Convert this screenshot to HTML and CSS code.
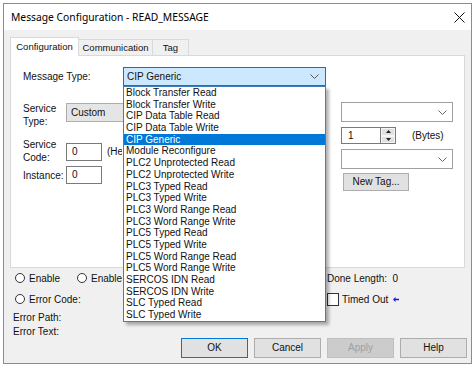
FILE: index.html
```html
<!DOCTYPE html>
<html lang="en">
<head>
  <meta charset="UTF-8">
  <title>Message Configuration - READ_MESSAGE</title>
  <link rel="stylesheet" href="styles.css">
</head>
<body>

<!-- Dialog window -->
<div class="window">
  <div class="titlebar">
    <span class="title">Message Configuration - READ_MESSAGE</span>
    <svg class="close" width="11" height="11" viewBox="0 0 11 11">
      <path d="M0.5 0.5L10.5 10.5M10.5 0.5L0.5 10.5" stroke="#111" stroke-width="1"/>
    </svg>
  </div>

  <div class="tabs">
    <div class="tab active">Configuration</div>
    <div class="tab comm">Communication</div>
    <div class="tab tag">Tag</div>
  </div>

  <div class="panel">
    <div class="msg-row">
      <span class="msg-label">Message Type:</span>
      <div class="combo selected">
        <span>CIP Generic</span>
        <svg class="chev" width="9" height="5" viewBox="0 0 9 5"><path d="M0.5 0.5L4.5 4.5L8.5 0.5" fill="none" stroke="#555"/></svg>
      </div>
    </div>

    <div class="cols">
      <div class="left">
        <div class="field service-type">
          <div class="label two">Service<br>Type:</div>
          <div class="box disabled">Custom</div>
        </div>
        <div class="field service-code">
          <div class="label two">Service<br>Code:</div>
          <div class="box input">0</div>
          <span class="hex">(Hex)</span>
        </div>
        <div class="field instance">
          <div class="label">Instance:</div>
          <div class="box input">0</div>
        </div>
      </div>

      <div class="right">
        <div class="combo empty">
          <svg class="chev" width="9" height="5" viewBox="0 0 9 5"><path d="M0.5 0.5L4.5 4.5L8.5 0.5" fill="none" stroke="#666"/></svg>
        </div>
        <div class="spin-row">
          <div class="box spin-input">1</div>
          <div class="spin-btns">
            <div class="spin-btn"><svg width="5" height="3" viewBox="0 0 5 3"><path d="M0 3L2.5 0L5 3Z" fill="#222"/></svg></div>
            <div class="spin-btn"><svg width="5" height="3" viewBox="0 0 5 3"><path d="M0 0L2.5 3L5 0Z" fill="#222"/></svg></div>
          </div>
          <span class="bytes">(Bytes)</span>
        </div>
        <div class="combo empty">
          <svg class="chev" width="9" height="5" viewBox="0 0 9 5"><path d="M0.5 0.5L4.5 4.5L8.5 0.5" fill="none" stroke="#666"/></svg>
        </div>
        <div class="btn newtag">New Tag...</div>
      </div>
    </div>

    <!-- open list of the Message Type combo -->
    <ul class="dropdown">
      <li>Block Transfer Read</li>
      <li>Block Transfer Write</li>
      <li>CIP Data Table Read</li>
      <li>CIP Data Table Write</li>
      <li class="hl">CIP Generic</li>
      <li>Module Reconfigure</li>
      <li>PLC2 Unprotected Read</li>
      <li>PLC2 Unprotected Write</li>
      <li>PLC3 Typed Read</li>
      <li>PLC3 Typed Write</li>
      <li>PLC3 Word Range Read</li>
      <li>PLC3 Word Range Write</li>
      <li>PLC5 Typed Read</li>
      <li>PLC5 Typed Write</li>
      <li>PLC5 Word Range Read</li>
      <li>PLC5 Word Range Write</li>
      <li>SERCOS IDN Read</li>
      <li>SERCOS IDN Write</li>
      <li>SLC Typed Read</li>
      <li>SLC Typed Write</li>
    </ul>
  </div>

  <div class="status">
    <div class="srow row-a">
      <span class="opt first"><span class="radio"></span>Enable</span>
      <span class="opt second"><span class="radio"></span>Enable</span>
      <span class="done">Done Length:&nbsp; 0</span>
    </div>
    <div class="srow row-b">
      <span class="opt err"><span class="radio"></span>Error Code:</span>
      <span class="check"></span>
      <span class="timed">Timed Out</span>
      <svg class="arrow" width="6" height="5" viewBox="0 0 6 5"><path d="M0 2.5L2.5 0V1.8H6V3.2H2.5V5Z" fill="#1a1ad0"/></svg>
    </div>
    <div class="srow row-c">Error Path:</div>
    <div class="srow row-d">Error Text:</div>
  </div>

  <div class="buttons">
    <div class="btn dlg default">OK</div>
    <div class="btn dlg">Cancel</div>
    <div class="btn dlg off">Apply</div>
    <div class="btn dlg">Help</div>
  </div>
</div>

</body>
</html>
```

FILE: styles.css
```css
* {
  box-sizing: border-box;
}
body {
  margin: 0;
  background: #fff;
  font-family: 'Liberation Sans', Arial, sans-serif;
  font-size: 10px;
  color: #111;
}
.window {
  margin: 3px 0 0 3px;
  width: 469px;
  height: 361px;
  border: 1px solid #8c8c8c;
  background: #f0f0f0;
}
.titlebar {
  height: 26px;
  background: #fff;
  display: flex;
  align-items: center;
  justify-content: space-between;
  padding: 0 6px 0 7px;
}
.title {
  font-family: 'Noto Sans', sans-serif;
  font-size: 10.3px;
  color: #000;
}
.close {
  margin-top: 1px;
}
.tabs {
  height: 25px;
  display: flex;
  align-items: flex-start;
  padding: 7px 0 0 6px;
  font-size: 9.5px;
}
.tab {
  height: 16px;
  line-height: 15px;
  margin-top: 2px;
  text-align: center;
  border: 1px solid #d9d9d9;
  border-bottom: none;
  border-left: none;
  background: #f0f0f0;
}
.tab.active {
  width: 69px;
  height: 19px;
  line-height: 18px;
  margin-top: 0;
  border-left: 1px solid #d9d9d9;
  background: #fff;
  position: relative;
  z-index: 1;
}
.tab.comm {
  width: 74px;
}
.tab.tag {
  width: 36px;
}
.panel {
  position: relative;
  height: 213px;
  margin: 0 6px;
  border: 1px solid #d9d9d9;
  background: #fff;
  padding: 11px 0 0 12px;
}
.msg-row {
  display: flex;
  align-items: center;
}
.msg-label {
  width: 100px;
}
.combo {
  height: 19px;
  display: flex;
  align-items: center;
  justify-content: space-between;
  padding: 0 6px 0 3px;
  border: 1px solid #7a7a7a;
  background: #fff;
}
.combo.selected {
  width: 203px;
  border-color: #0078d7;
  background: #cce8ff;
}
.combo.empty {
  width: 112px;
  height: 20px;
  justify-content: flex-end;
  padding-right: 5px;
  border-color: #a0a0a0;
}
.chev {
  display: block;
}
.cols {
  display: flex;
  margin-top: 15px;
}
.left {
  width: 318px;
}
.field {
  display: flex;
  align-items: flex-start;
}
.label {
  width: 43px;
}
.label.two {
  line-height: 12.5px;
}
.service-type .label {
  margin-top: 2px;
}
.box {
  border: 1px solid #7a7a7a;
  background: #fff;
  padding-left: 4px;
}
.box.disabled {
  width: 80px;
  height: 19px;
  line-height: 17px;
  margin-top: 2px;
  border-color: #adadad;
  background: #e5e5e5;
}
.box.input {
  width: 36px;
  height: 18px;
  line-height: 16px;
  padding-left: 5px;
}
.service-code {
  margin-top: 11px;
}
.service-code .box {
  margin-top: 4px;
}
.hex {
  width: 15px;
  overflow: hidden;
  white-space: nowrap;
  margin: 7px 0 0 5px;
}
.instance {
  margin-top: 2px;
  align-items: center;
}
.right {
  width: 112px;
  padding-top: 1px;
}
.spin-row {
  display: flex;
  align-items: center;
  margin-top: 5px;
  height: 17px;
}
.box.spin-input {
  width: 40px;
  height: 17px;
  line-height: 15px;
  padding-left: 6px;
}
.spin-btns {
  width: 15px;
  height: 17px;
  display: flex;
  flex-direction: column;
  border: 1px solid #7a7a7a;
  border-left: none;
}
.spin-btn {
  flex: 1;
  display: flex;
  align-items: center;
  justify-content: center;
  background: #e1e1e1;
  border: 1px solid #f5f5f5;
}
.bytes {
  margin-left: 16px;
}
.spin-row + .combo.empty {
  margin-top: 5px;
}
.btn {
  text-align: center;
  border: 1px solid #adadad;
  background: #e1e1e1;
}
.newtag {
  width: 66px;
  height: 18px;
  line-height: 16px;
  margin: 4px 0 0 2px;
}
.dropdown {
  position: absolute;
  left: 112px;
  top: 30px;
  width: 203px;
  height: 236px;
  margin: 0;
  padding: 0;
  list-style: none;
  background: #fff;
  border: 1px solid #3f7fbf;
  box-shadow: 3px 3px 3px rgba(0,0,0,0.3);
  z-index: 2;
}
.dropdown li {
  height: 11.7px;
  line-height: 11.7px;
  padding-left: 2px;
  white-space: nowrap;
}
.dropdown li.hl {
  background: #0078d7;
  color: #fff;
}
.status {
  padding-left: 11px;
}
.srow {
  display: flex;
  align-items: center;
}
.row-a {
  height: 20px;
}
.row-b {
  height: 22px;
}
.row-c, .row-d {
  height: 14px;
  margin-left: -2px;
}
.opt {
  display: flex;
  align-items: center;
  white-space: nowrap;
  overflow: hidden;
}
.opt.first {
  width: 62px;
}
.opt.second {
  width: 46px;
  margin-right: 204px;
}
.opt.err {
  width: 312px;
}
.radio {
  width: 10px;
  height: 10px;
  border: 1px solid #333;
  border-radius: 50%;
  background: #fff;
  margin-right: 4px;
  flex-shrink: 0;
}
.check {
  width: 12px;
  height: 13px;
  border: 1px solid #333;
  background: #fff;
}
.timed {
  margin: 0 5px 0 3px;
}
.buttons {
  display: flex;
  justify-content: flex-end;
  gap: 6px;
  padding-right: 4px;
}
.btn.dlg {
  width: 67px;
  height: 20px;
  line-height: 18px;
}
.btn.default {
  border-color: #0078d7;
}
.btn.off {
  background: #cccccc;
  border-color: #bfbfbf;
  color: #a0a0a0;
}
```
